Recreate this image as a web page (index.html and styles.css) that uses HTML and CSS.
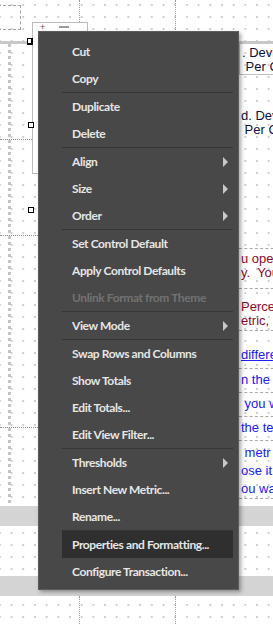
FILE: index.html
```html
<!DOCTYPE html>
<html lang="en">

<head>
  <meta charset="UTF-8">
  <title>Context menu</title>
  <link rel="stylesheet" href="styles.css">
</head>

<body>
  <div id="canvas">
    <div class="band band-top"></div>
    <div class="band band-a"></div>
    <div class="band band-b"></div>

    <div class="dash-box"></div>
    <div class="vdot vdot-1"></div>
    <div class="vdot vdot-2"></div>
    <div class="vdot vdot-3"></div>
    <div class="vdot vdot-4"></div>
    <div class="hdot hdot-1"></div>
    <div class="hdot hdot-2"></div>
    <div class="hdot hdot-3"></div>
    <div class="grip-line"></div>

    <div class="control">
      <div class="control-head"><span class="plus">+</span><span class="bar"></span></div>
    </div>

    <div class="handle h1"></div>
    <div class="handle h2"></div>
    <div class="handle h3"></div>

    <div class="pane">
      <div class="cell cell-box">
        <p class="ink">. Devia</p>
        <p class="ink">&nbsp;Per Cu</p>
      </div>
      <div class="cell cell-plain">
        <p class="ink">d. Devi</p>
        <p class="ink">&nbsp;Per Cu</p>
      </div>
      <div class="cell cell-dash c-open">
        <p class="red">u ope</p>
        <p class="red">y.&nbsp; You</p>
      </div>
      <div class="cell cell-dash c-perce">
        <p class="red">Perce</p>
        <p class="red">etric,</p>
      </div>
      <div class="cell cell-dash c-diff"><p class="blue link">differe</p></div>
      <div class="cell cell-dash one"><p class="blue">n the f</p></div>
      <div class="cell cell-dash one"><p class="blue">&nbsp;you w</p></div>
      <div class="cell cell-dash one"><p class="blue">the te</p></div>
      <div class="cell cell-dash cell-last">
        <p class="blue">&nbsp;metr</p>
        <p class="blue">ose it</p>
        <p class="blue">ou wa</p>
      </div>
    </div>
  </div>

  <ul class="menu">
    <li class="item">Cut</li>
    <li class="item">Copy</li>
    <li class="sep"></li>
    <li class="item">Duplicate</li>
    <li class="item">Delete</li>
    <li class="sep"></li>
    <li class="item sub">Align</li>
    <li class="item sub">Size</li>
    <li class="item sub">Order</li>
    <li class="sep"></li>
    <li class="item">Set Control Default</li>
    <li class="item">Apply Control Defaults</li>
    <li class="item disabled">Unlink Format from Theme</li>
    <li class="sep"></li>
    <li class="item sub">View Mode</li>
    <li class="sep"></li>
    <li class="item">Swap Rows and Columns</li>
    <li class="item">Show Totals</li>
    <li class="item">Edit Totals...</li>
    <li class="item">Edit View Filter...</li>
    <li class="sep"></li>
    <li class="item sub">Thresholds</li>
    <li class="item">Insert New Metric...</li>
    <li class="item">Rename...</li>
    <li class="sep"></li>
    <li class="item active">Properties and Formatting...</li>
    <li class="item">Configure Transaction...</li>
  </ul>
</body>

</html>
```

FILE: styles.css
```css
:root {
    --menu: #484848;
    --menu-text: #e6e6e6;
    --dots: #a0a0a0;
    --band: #d4d4d4;
}

html,
body {
    height: 100%;
    margin: 0;
    padding: 0;
}

body {
    position: relative;
    overflow: hidden;
    background-color: #fff;
    background-image: radial-gradient(circle, var(--dots) 0.6px, transparent 0.8px);
    background-size: 11.7px 12px;
    background-position: -6px -1px;
    font-family: "Liberation Sans", Arial, sans-serif;
}

#canvas {
    position: absolute;
    inset: 0;
    overflow: hidden;
}

/* grey bands */
.band {
    position: absolute;
    left: 0;
    right: 0;
    background-color: var(--band);
}

.band-top {
    top: 41px;
    height: 3px;
    background-color: #c8c8c8;
}

.band-a {
    top: 506px;
    height: 20px;
}

.band-b {
    top: 576px;
    height: 20px;
}

.dash-box {
    position: absolute;
    left: -2px;
    top: 5px;
    width: 21px;
    height: 23px;
    border: 1px dashed #a0a0a0;
}

.vdot {
    position: absolute;
    width: 0;
    border-left: 1px dotted #9a9a9a;
}

.vdot-1 { left: 79px; top: 0; height: 30px; }
.vdot-2 { left: 175px; top: 0; height: 30px; }
.vdot-3 { left: 79px; top: 596px; height: 28px; }
.vdot-4 { left: 175px; top: 596px; height: 28px; }

.hdot {
    position: absolute;
    left: 0;
    width: 38px;
    border-top: 1px dotted #8a8a8a;
}

.hdot-1 { top: 139px; }
.hdot-2 { top: 235px; }
.hdot-3 { top: 427px; }

.grip-line {
    position: absolute;
    left: 8px;
    top: 44px;
    width: 3px;
    height: 462px;
    background-image: linear-gradient(#c4c4c4 50%, transparent 50%);
    background-size: 3px 6px;
}

.control {
    position: absolute;
    left: 32px;
    top: 22px;
    width: 54px;
    height: 150px;
    border: 1px solid #bcbcbc;
    background-color: #fff;
}

.control-head {
    display: flex;
    align-items: center;
    gap: 14px;
    height: 8px;
    padding-left: 7px;
    font-size: 9px;
    color: #555;
}

.bar {
    width: 10px;
    height: 2px;
    background-color: #999;
}

.handle {
    position: absolute;
    width: 4px;
    height: 4px;
    border: 1px solid #000;
    background-color: #fff;
}

.h1 { left: 27px; top: 38px; width: 3px; height: 4px; border-width: 1px 2px 2px 1px; }
.h2 { left: 28px; top: 122px; }
.h3 { left: 28px; top: 207px; }

/* right-hand grid fragments */
.pane {
    position: absolute;
    left: 239px;
    top: 44px;
    width: 40px;
    display: flex;
    flex-direction: column;
}

.cell {
    padding-left: 2px;
    box-sizing: border-box;
}

.cell p {
    margin: 0;
    font-family: "Liberation Sans", Arial, sans-serif;
    font-size: 13px;
    line-height: 14px;
    white-space: nowrap;
}

.cell-box {
    height: 31px;
    padding-top: 2px;
    border-left: 1px solid #c0c0c0;
    border-bottom: 1px solid #c0c0c0;
}

.cell-plain {
    height: 173px;
    padding-top: 34px;
}

.cell-dash {
    border-top: 1px dashed #a8a8a8;
}

.c-open {
    height: 40px;
    padding-top: 3px;
}

.c-perce {
    height: 42px;
    padding-top: 11px;
}

.c-diff {
    height: 38px;
    padding-top: 17px;
}

.cell-dash.one {
    height: 24px;
    padding-top: 4px;
}

.cell-last {
    height: 59px;
    padding-top: 3px;
    border-bottom: 1px dashed #a8a8a8;
}

.cell-last p {
    line-height: 18px;
}

.ink { color: #101040; }
.red { color: #8b0a2a; }
.blue { color: #2020f0; }
.link { text-decoration: underline; }

/* context menu */
.menu {
    position: absolute;
    left: 38px;
    top: 31px;
    width: 199px;
    margin: 0;
    padding: 6px 0 4px;
    list-style: none;
    background-color: var(--menu);
    border: 1px solid #5c5c5c;
    box-shadow: 2px 2px 4px rgba(0, 0, 0, 0.35);
}

.item {
    position: relative;
    height: 27px;
    margin: 0 5px 0 23px;
    padding-left: 10px;
    font-family: Lato, "Liberation Sans", sans-serif;
    font-size: 12px;
    font-weight: bold;
    letter-spacing: -0.4px;
    line-height: 27px;
    color: var(--menu-text);
    white-space: nowrap;
}

.item.disabled {
    color: #727272;
}

.item.active {
    background-color: #2f2f2f;
}

.item.sub::after {
    content: "";
    position: absolute;
    right: 5px;
    top: 9px;
    border-left: 5px solid #c8c8c8;
    border-top: 5px solid transparent;
    border-bottom: 5px solid transparent;
}

.sep {
    height: 1px;
    margin: 0 5px 0 23px;
    background-color: #353535;
}
```
